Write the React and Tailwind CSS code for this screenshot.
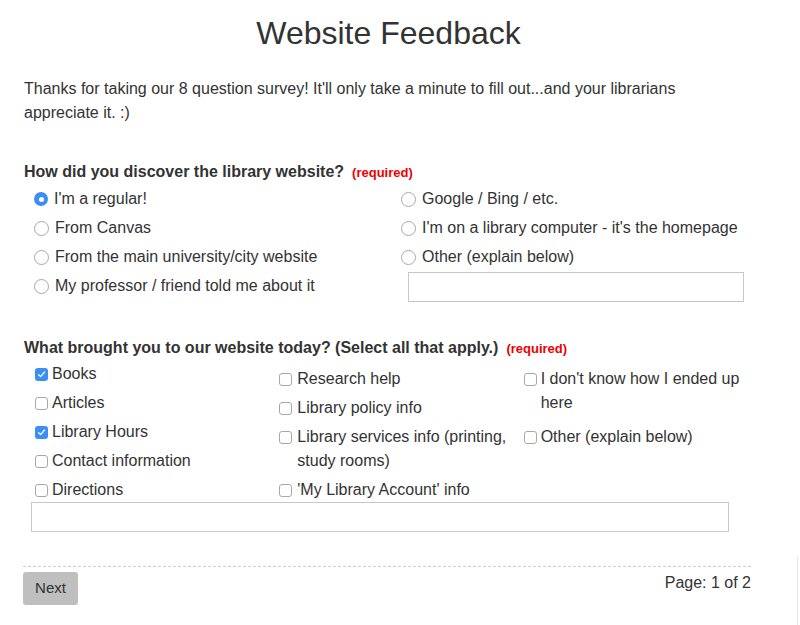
import React from "react";

function Radio({ checked }) {
  return checked ? (
    <span className="w-[14px] h-[14px] rounded-full bg-[#3b8ff2] flex items-center justify-center shrink-0">
      <span className="w-[5px] h-[5px] rounded-full bg-white" />
    </span>
  ) : (
    <span className="w-[15px] h-[15px] rounded-full border border-[#a8a8a8] bg-white shrink-0" />
  );
}

function Check({ checked }) {
  return checked ? (
    <span className="w-[13px] h-[13px] rounded-[3px] bg-[#3b8ff2] flex items-center justify-center shrink-0">
      <svg width="9" height="9" viewBox="0 0 10 10">
        <path d="M1.8 5.2 L4 7.4 L8.4 2.2" fill="none" stroke="white" strokeWidth="1.4" strokeLinecap="round" strokeLinejoin="round" />
      </svg>
    </span>
  ) : (
    <span className="w-[13px] h-[13px] rounded-[3px] border border-[#a8a8a8] bg-white shrink-0" />
  );
}

function RadioRow({ checked, children }) {
  return (
    <div className="flex items-center gap-[6px] h-[24px]">
      <Radio checked={checked} />
      <span className="leading-[24px] whitespace-nowrap">{children}</span>
    </div>
  );
}

function CheckRow({ checked, children, className = "" }) {
  return (
    <div className={`flex items-start gap-[4px] ${className}`}>
      <span className="h-[24px] flex items-center">
        <Check checked={checked} />
      </span>
      <span className="leading-[24px]">{children}</span>
    </div>
  );
}

export default function App() {
  return (
    <div className="relative w-[800px] h-[625px] overflow-hidden bg-white text-[#333] text-[16px] font-['Liberation_Sans',Arial,Helvetica,sans-serif]">
      <div className="pl-[24px] pr-[47px]">
        <h1 className="text-center text-[32px] leading-[36px] pt-[15px] font-normal">Website Feedback</h1>

        <p className="mt-[26px] leading-[24px]">
          Thanks for taking our 8 question survey! It'll only take a minute to fill out...and your librarians appreciate it. :)
        </p>

        <div className="mt-[35px] leading-[24px] flex items-baseline">
          <span className="font-bold">How did you discover the library website?</span>
          <span className="ml-[8px] text-[13px] font-bold text-[#ee0000]">(required)</span>
        </div>

        <div className="flex mt-[2px]">
          <div className="w-[377px] pl-[10px] flex flex-col gap-[5px]">
            <RadioRow checked>I'm a regular!</RadioRow>
            <RadioRow>From Canvas</RadioRow>
            <RadioRow>From the main university/city website</RadioRow>
            <RadioRow>My professor / friend told me about it</RadioRow>
          </div>
          <div className="flex flex-col gap-[5px]">
            <RadioRow>Google / Bing / etc.</RadioRow>
            <RadioRow>I'm on a library computer - it's the homepage</RadioRow>
            <RadioRow>Other (explain below)</RadioRow>
            <div className="pl-[7px] -mt-[2px]">
              <div className="w-[336px] h-[30px] border border-[#c8c8c8] bg-white" />
            </div>
          </div>
        </div>

        <div className="mt-[34px] leading-[24px] flex items-baseline">
          <span className="font-bold">What brought you to our website today? (Select all that apply.)</span>
          <span className="ml-[8px] text-[13px] font-bold text-[#ee0000]">(required)</span>
        </div>

        <div className="flex mt-[1px] pl-[11px]">
          <div className="w-[245px] flex flex-col gap-[5px]">
            <CheckRow checked>Books</CheckRow>
            <CheckRow>Articles</CheckRow>
            <CheckRow checked>Library Hours</CheckRow>
            <CheckRow>Contact information</CheckRow>
            <CheckRow>Directions</CheckRow>
          </div>
          <div className="w-[245px] pt-[5px] flex flex-col gap-[5px]">
            <CheckRow className="gap-[5px]">Research help</CheckRow>
            <CheckRow className="gap-[5px]">Library policy info</CheckRow>
            <CheckRow className="gap-[5px]">
              Library services info (printing,
              <br />
              study rooms)
            </CheckRow>
            <CheckRow className="gap-[5px]">'My Library Account' info</CheckRow>
          </div>
          <div className="w-[230px] pt-[5px] flex flex-col gap-[10px]">
            <CheckRow>
              I don't know how I ended up
              <br />
              here
            </CheckRow>
            <CheckRow>Other (explain below)</CheckRow>
          </div>
        </div>

        <div className="pl-[7px]">
          <div className="w-[698px] h-[30px] border border-[#c8c8c8] bg-white" />
        </div>

        <div className="-ml-[1px] w-[728px] mt-[34px] border-t border-dashed border-[#d0d0d0]" />

        <div className="-ml-[1px] w-[728px] flex justify-between items-start mt-[5px]">
          <div className="w-[55px] h-[33px] rounded-[3px] bg-[#bfbfbf] flex items-center justify-center text-[15px] text-[#333]">
            Next
          </div>
          <div className="leading-[20px] pt-[1px]">Page: 1 of 2</div>
        </div>
      </div>
      <div className="absolute right-[2px] top-[557px] bottom-0 w-px bg-[#e6e6e6]" />
    </div>
  );
}
